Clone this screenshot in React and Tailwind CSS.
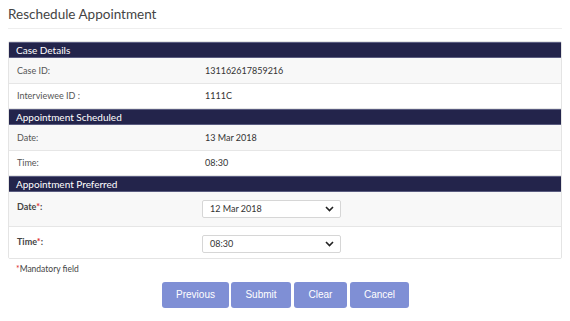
import React from "react";

const Header = ({ children }) => (
  <div className="h-[16px] bg-[#23244b] text-white text-[10px] leading-[15px] pl-[7px] border-y border-[#5a5c80]">
    {children}
  </div>
);

const Row = ({ label, value, alt, h = "h-[26px]" }) => (
  <div className={`flex items-center ${h} ${alt ? "bg-[#f8f8f8]" : "bg-white"} border-b border-[#e6e6e6] text-[9px]`}>
    <div className="w-[196px] pl-[8px] text-[#555]">{label}</div>
    <div className="text-[#333]">{value}</div>
  </div>
);

const Chevron = () => (
  <svg width="9" height="6" viewBox="0 0 9 6" className="text-[#222]">
    <path d="M1 1l3.5 3.5L8 1" fill="none" stroke="currentColor" strokeWidth="1.6" />
  </svg>
);

const SelRow = ({ label, value, alt, h }) => (
  <div className={`flex items-start ${h} ${alt ? "bg-[#f8f8f8]" : "bg-white"} text-[9px]`}>
    <div className="w-[193px] pl-[8px] pt-[8px] font-bold text-[#444]">
      {label}
      <span className="text-[#e03030]">*</span>:
    </div>
    <div className="mt-[8px] w-[139px] h-[18px] border border-[#d6d6d6] rounded-[2px] bg-white flex items-center justify-between pl-[7px] pr-[6px] text-[#333]">
      <span>{value}</span>
      <Chevron />
    </div>
  </div>
);

export default function App() {
  return (
    <div className="w-[570px] h-[321px] bg-white font-['Lato',sans-serif] px-[8px]">
      <div className="pt-[4px] h-[28px] text-[13.5px] text-[#444]">Reschedule Appointment</div>
      <div className="border-t border-[#eee]" />
      <div className="mt-[12px] w-[554px] border border-[#e4e4e4] rounded-[2px] overflow-hidden">
        <Header>Case Details</Header>
        <Row label="Case ID:" value="131162617859216" alt />
        <Row label="Interviewee ID :" value="1111C" h="h-[25px]" />
        <Header>Appointment Scheduled</Header>
        <Row label="Date:" value="13 Mar 2018" alt />
        <Row label="Time:" value="08:30" h="h-[25px]" />
        <Header>Appointment Preferred</Header>
        <div className="border-b border-[#e6e6e6]">
          <SelRow label="Date" value="12 Mar 2018" alt h="h-[34px]" />
        </div>
        <SelRow label="Time" value="08:30" h="h-[31px]" />
      </div>
      <div className="mt-[4px] pl-[8px] text-[8.5px] text-[#444]">
        <span className="text-[#e03030]">*</span>Mandatory field
      </div>
      <div className="mt-[6px] flex justify-center pl-[1px] font-['Liberation_Sans',sans-serif] text-[10px] text-white">
        <button className="w-[67px] h-[26px] rounded-[3px] bg-[#7f8fd5]">Previous</button>
        <button className="w-[60px] h-[26px] rounded-[3px] bg-[#7f8fd5] ml-[2px]">Submit</button>
        <button className="w-[53px] h-[26px] rounded-[3px] bg-[#7f8fd5] ml-[3px]">Clear</button>
        <button className="w-[59px] h-[26px] rounded-[3px] bg-[#7f8fd5] ml-[3px]">Cancel</button>
      </div>
    </div>
  );
}
